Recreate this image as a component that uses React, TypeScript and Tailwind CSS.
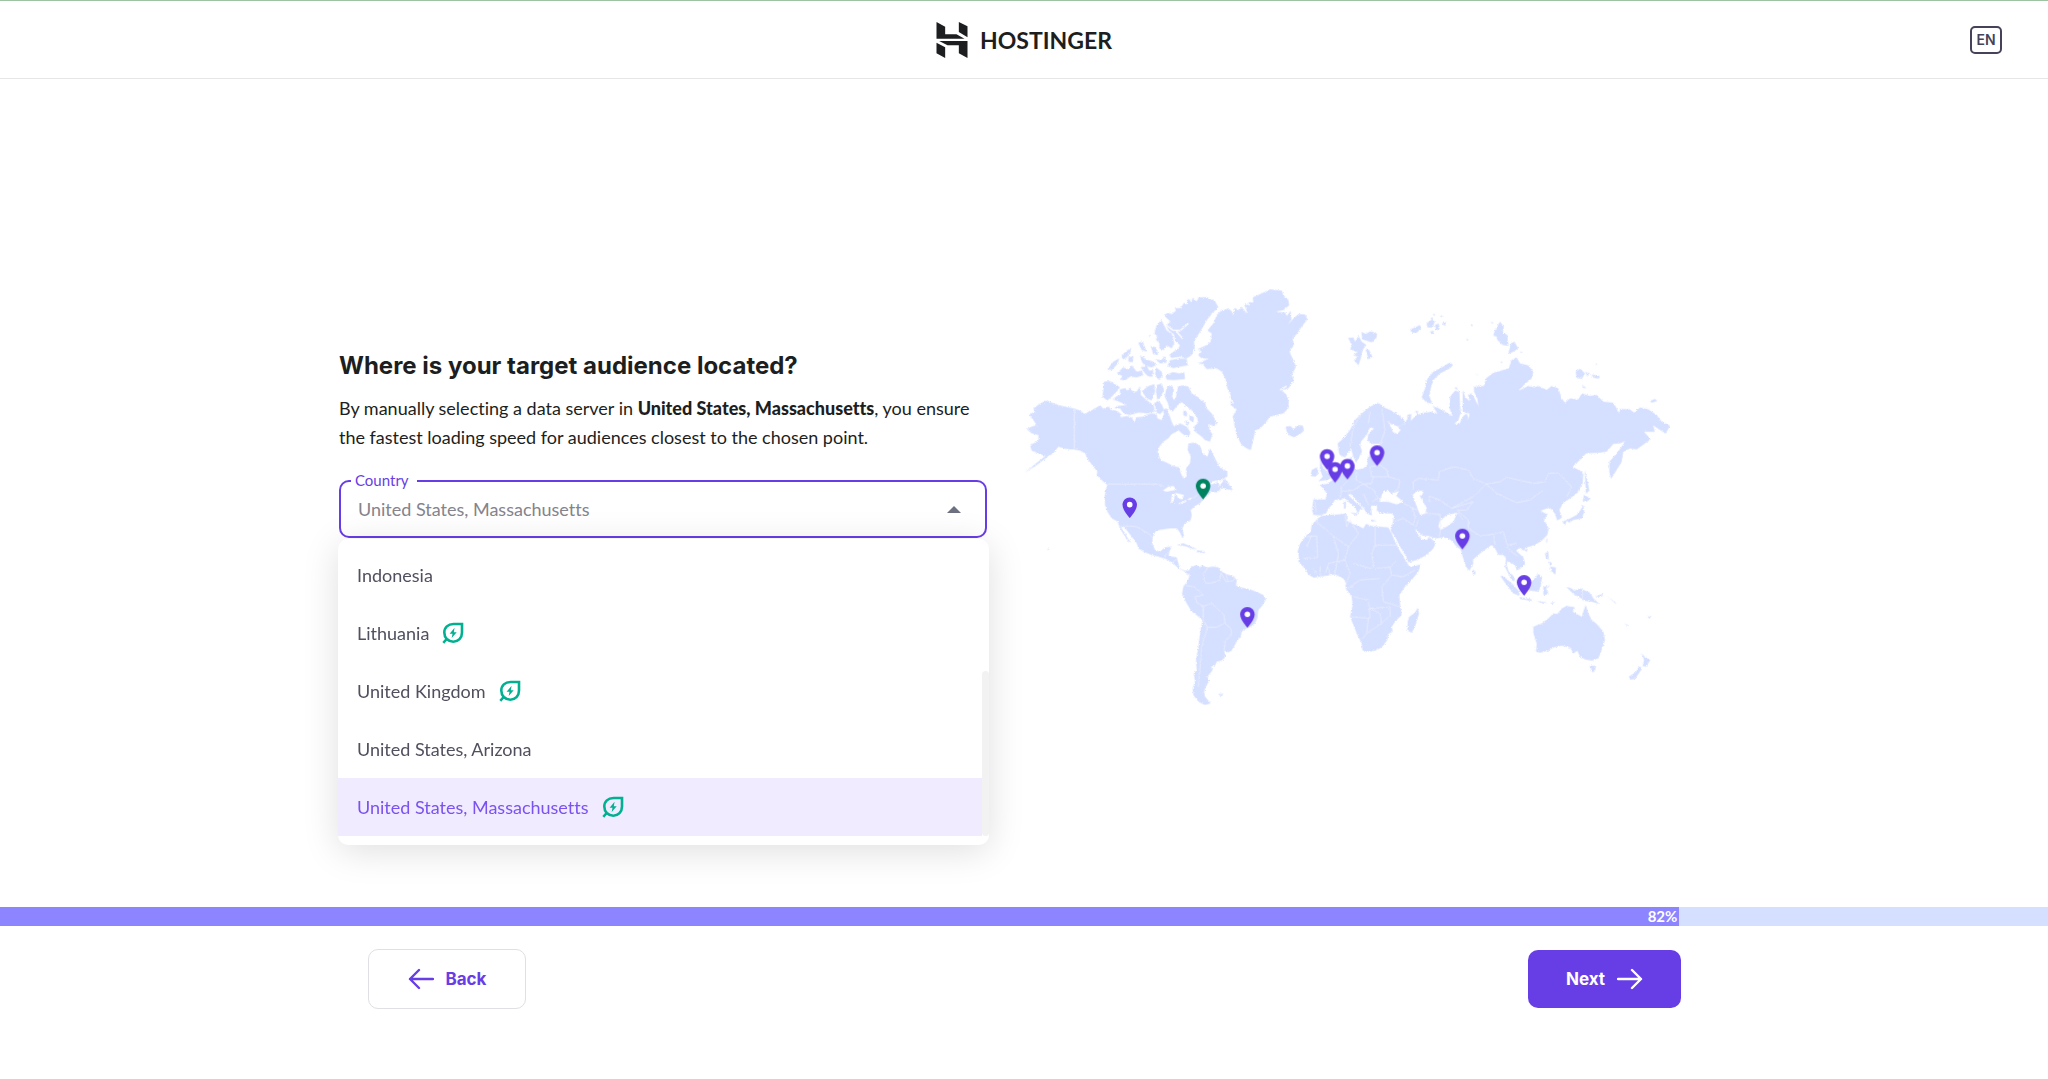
import React from "react";

const LAND = "#d5dfff";

const pins = [
  { x: 921, y: 568, color: "#673de6" },
  { x: 982, y: 597, color: "#673de6" },
  { x: 945, y: 607, color: "#673de6" },
  { x: 1071, y: 557, color: "#673de6" },
  { x: 549, y: 657, color: "#008361" },
  { x: 329, y: 713, color: "#673de6" },
  { x: 682, y: 1042, color: "#673de6" },
  { x: 1327, y: 807, color: "#673de6" },
  { x: 1512, y: 946, color: "#673de6" },
];

const options = [
  { name: "Indonesia", green: false },
  { name: "Lithuania", green: true },
  { name: "United Kingdom", green: true },
  { name: "United States, Arizona", green: false },
  { name: "United States, Massachusetts", green: true },
];

function WorldMap() {
  return (
    <svg viewBox="0 0 1980 1290" className="block w-full" role="img" aria-label="Data server locations">
      <defs>
        <filter id="coast" x="0" y="0" width="100%" height="100%">
          <feTurbulence type="fractalNoise" baseFrequency="0.22" numOctaves="2" seed="4" result="n" />
          <feDisplacementMap in="SourceGraphic" in2="n" scale="8" xChannelSelector="R" yChannelSelector="G" />
        </filter>
      </defs>
      <g filter="url(#coast)">
        {/* North America */}
        <g fill={LAND}>
          <path d="M27 403L45 395 40 385 58 372 80 361 95 368 115 375 135 380 163 386 180 392 195 402 210 392 225 385 240 376 250 386 265 380 275 390 290 392 305 404 300 412 320 408 335 412 344 428 348 412 370 410 380 404 395 400 410 402 412 415 425 420 432 402 430 388 440 385 448 405 455 425 462 440 470 432 480 440 470 455 455 462 445 475 430 485 418 500 413 518 422 540 440 548 460 558 478 562 482 580 490 594 500 590 498 565 510 550 512 530 503 510 505 490 525 488 540 498 550 522 562 530 570 505 580 525 590 545 600 562 622 575 622 590 605 600 590 602 575 604 571 615 578 612 592 606 598 614 595 622 615 596 618 602 610 620 590 638 575 634 560 650 550 658 540 670 525 678 512 690 515 705 512 720 495 730 487 745 492 768 488 774 478 755 470 745 450 745 430 748 408 752 398 770 397 790 405 810 420 815 435 802 455 800 448 815 446 828 470 832 475 850 480 866 495 872 510 872 505 884 490 872 475 865 460 850 440 838 415 830 395 825 370 815 355 805 350 790 335 770 320 750 308 738 303 742 315 760 325 778 334 788 325 785 312 765 300 745 293 725 275 715 262 695 255 675 254 650 258 625 262 615 250 605 240 595 230 585 232 575 220 560 205 540 195 520 180 512 160 508 145 508 130 505 115 500 100 520 85 528 70 540 50 555 14 578 48 550 76 528 60 522 35 512 30 495 45 488 55 480 55 465 35 460 20 447 35 440 50 435 40 420Z" />
          <path d="M620 600L628 615 639 630 620 628 606 622Z" />
          <path d="M252 305L270 303 285 312 300 322 290 335 275 350 262 362 247 350 250 330Z" />
          <path d="M300 328L316 324 322 332 330 322 338 334 350 335 360 318 363 345 380 360 400 375 405 395 380 400 355 398 330 405 310 400 300 385 283 385 290 378 320 375 300 366 278 358 290 348 300 345Z" />
          <path d="M262 268L280 245 298 235 292 252 275 270ZM290 280L310 262 325 268 335 256 350 275 365 272 370 285 350 292 330 290 315 302 300 298 308 288ZM305 225L333 203 332 215 318 235 308 238ZM325 232L340 228 338 247 325 245ZM355 188L368 185 374 200 380 215 365 210ZM360 225L378 238 400 245 408 255 395 262 375 258 365 245ZM362 262L380 258 388 272 400 270 398 290 385 290 375 280ZM392 198L408 202 414 222 400 224ZM385 165L392 166 392 172ZM405 238L424 240 434 228 440 248 420 250ZM408 262L425 275 428 290 415 298 405 285ZM436 286L458 276 478 280 493 276 495 297 460 300 440 299ZM442 258L450 240 476 236 500 236 503 256 482 260 460 264Z" />
          <path d="M405 150L410 135 424 120 432 135 440 152 455 160 463 190 455 205 440 196 432 210 418 206 418 188 408 180 412 168 404 162Z" />
          <path d="M430 106L445 98 455 102 468 92 464 84 482 84 492 68 500 74 505 56 514 66 518 53 530 64 536 52 560 51 585 63 595 82 580 96 562 118 548 142 534 165 522 185 524 205 515 225 500 235 478 230 455 234 447 225 462 214 474 206 480 196 465 182 462 164 446 150 438 135 452 125Z" />
          <path d="M365 333L385 318 403 312 405 335 395 362 380 355ZM410 315L425 310 432 330 422 350 412 360 408 335ZM402 370L415 362 425 372 432 390 420 402 410 398Z" />
          <path d="M440 322L455 315 462 330 456 350 466 360 474 320 490 316 505 320 515 340 535 352 555 368 560 385 575 400 592 430 580 440 568 430 568 450 577 462 570 485 555 480 545 470 525 455 522 440 535 428 530 410 520 395 500 380 485 366 470 378 458 395 448 388 444 370 434 350Z" />
          <path d="M466 442L480 430 500 440 512 458 505 470 488 462ZM490 392L502 396 500 410 490 406ZM508 404L522 412 520 426 508 420ZM495 420L508 428 502 438Z" />
          <path d="M470 795L490 790 510 798 532 808 515 806 495 798ZM530 811L552 813 555 819 532 817ZM82 806L88 808 84 812ZM594 1242L611 1241 602 1248Z" />
        </g>
        {/* Greenland and Iceland */}
        <g fill={LAND}>
          <path d="M533 207L560 195 572 185 575 160 562 152 580 130 590 105 600 95 625 85 636 95 640 106 644 84 658 90 664 80 684 104 672 72 688 76 685 66 700 68 698 52 730 38 750 28 785 32 790 45 805 60 808 75 790 90 765 95 796 98 800 108 812 92 814 118 803 134 820 116 835 102 855 103 862 118 845 140 832 160 818 175 822 195 808 215 820 240 828 260 815 285 822 300 805 325 785 330 800 345 806 365 805 385 790 400 770 405 750 410 735 430 720 445 705 452 700 480 692 510 680 505 665 495 652 470 645 445 638 410 650 388 632 375 632 345 622 325 618 300 605 275 590 265 560 267 548 252 535 250 566 236 545 235 534 225 545 215Z" />
          <path d="M797 440L812 438 820 447 835 435 848 437 852 452 840 462 822 472 808 465 800 455Z" />
        </g>
        {/* South America */}
        <g transform="translate(0 480)">
          <path
            fill={LAND}
            d="M506 392L515 380 530 375 540 382 545 375 560 382 580 380 595 382 605 395 620 403 640 408 650 420 648 437 665 443 690 448 715 458 730 465 738 478 728 495 715 510 712 535 702 555 680 565 665 575 662 590 650 605 635 632 625 637 612 632 617 650 605 662 590 665 585 677 573 680 578 690 570 700 562 710 568 722 558 738 552 755 555 770 572 790 555 795 535 785 520 765 518 745 525 725 521 700 530 690 528 660 535 620 540 580 547 540 530 525 515 515 500 490 486 462 490 440 502 425 508 410Z"
          />
        </g>
        {/* Eurasia mainland */}
        <path
          fill={LAND}
          d="M880 705L876 690 880 658 917 658 920 640 910 625 898 615 920 612 935 602 950 595 965 585 975 575 985 565 983 540 994 530 1000 552 1005 570 1030 565 1042 555 1042 540 1045 526 1056 532 1052 510 1080 502 1078 492 1052 492 1042 480 1045 462 1062 445 1050 442 1040 465 1025 482 1020 495 1026 515 1015 535 1008 548 1000 530 993 505 975 532 958 524 953 490 970 475 990 450 1005 420 1025 400 1050 380 1075 368 1092 382 1110 390 1140 408 1148 430 1135 440 1110 430 1102 422 1115 445 1118 456 1132 462 1142 450 1134 442 1155 430 1160 418 1170 424 1190 405 1210 398 1235 396 1252 400 1238 378 1254 384 1275 395 1298 408 1288 385 1290 350 1305 332 1318 335 1320 370 1322 400 1314 422 1302 432 1318 432 1330 408 1340 400 1346 418 1348 400 1328 394 1328 366 1328 330 1336 352 1350 364 1344 344 1356 340 1375 378 1372 355 1362 335 1362 320 1392 318 1398 295 1420 278 1450 270 1466 265 1475 240 1490 232 1500 250 1525 256 1540 275 1535 295 1515 312 1496 332 1525 318 1542 322 1555 318 1580 330 1595 318 1615 325 1625 355 1635 368 1650 355 1675 358 1685 340 1710 348 1730 345 1750 365 1780 368 1790 385 1798 400 1800 387 1830 388 1842 398 1860 382 1885 388 1910 405 1925 425 1950 437 1937 460 1915 447 1900 436 1904 456 1872 455 1892 478 1875 490 1850 508 1830 505 1810 515 1805 545 1790 570 1773 597 1768 575 1768 545 1790 520 1805 500 1816 483 1800 490 1780 492 1760 515 1740 518 1698 520 1680 540 1657 560 1680 572 1690 580 1688 610 1670 640 1650 655 1630 668 1618 690 1626 712 1612 722 1605 702 1595 688 1585 684 1562 692 1578 702 1584 700 1572 720 1586 745 1582 765 1565 782 1545 795 1520 802 1510 812 1500 802 1488 812 1510 832 1516 852 1500 866 1490 872 1485 855 1470 848 1462 842 1460 855 1466 875 1480 888 1486 906 1475 900 1462 875 1455 860 1458 835 1450 825 1435 825 1425 805 1415 795 1400 805 1380 820 1358 840 1360 850 1348 872 1338 860 1328 830 1322 808 1310 800 1300 788 1290 778 1270 772 1245 775 1225 768 1208 768 1195 755 1185 745 1190 758 1205 778 1222 780 1226 770 1248 788 1240 805 1220 825 1195 838 1165 847 1158 830 1140 800 1125 770 1112 752 1118 730 1122 708 1115 700 1080 700 1070 690 1072 676 1052 678 1056 706 1040 700 1030 682 1010 662 992 642 984 644 1008 668 1029 684 1020 688 1014 702 1006 682 988 668 974 654 962 660 944 660 938 672 925 685 918 700 900 706Z"
        />
        {/* Africa */}
        <g transform="translate(780 240)" fill={LAND}>
          <path d="M113 475L125 468 150 465 175 463 197 460 203 472 200 482 215 490 235 498 250 505 258 492 275 498 300 500 325 502 335 520 345 545 358 570 370 590 383 612 390 620 422 613 415 635 395 660 375 680 358 705 360 730 365 765 345 785 335 800 338 815 325 822 322 840 305 862 285 872 255 876 247 870 245 850 232 825 220 795 210 770 218 735 215 710 197 685 198 670 190 655 165 643 140 647 100 653 85 643 70 620 55 605 57 590 53 575 60 550 80 525 92 515 95 495 105 485Z" />
          <path d="M413 743L417 760 405 800 395 818 382 812 383 785 388 770 405 758Z" />
          <path d="M92 348L95 330 110 322 116 335 108 350ZM120 300L128 320 140 335 150 350 150 358 125 362 115 365 128 350 120 330ZM192 424L198 422 197 446 192 446ZM212 458L232 460 230 468ZM270 478L290 482 275 485ZM578 628L587 635 585 643 578 643Z" />
        </g>
        {/* Arctic islands and north-east Asia */}
        <g transform="translate(1140 0)" fill={LAND}>
          <path d="M150 247L159 255 150 265 120 280 100 300 92 325 88 350 97 370 80 368 65 352 75 325 80 300 100 275 125 262Z" />
          <path d="M285 150L300 125 312 140 308 158 322 165 325 198 308 195 292 180 290 170 280 166ZM325 222L332 190 343 185 355 205 340 215ZM527 275L540 266 555 280 545 297 530 294ZM556 276L570 280 562 290ZM575 283L600 289 596 296 580 293ZM546 314L560 325 548 323ZM750 363L765 357 772 363 755 368Z" />
          <path d="M30 148L45 142 60 135 63 146 50 158 36 158ZM80 130L95 118 104 125 98 142 82 142ZM105 135L115 130 120 145 108 152ZM125 130L138 126 136 138ZM88 155L102 152 98 162ZM98 102L106 103 102 108ZM212 134L220 135 215 139ZM272 126L281 128 276 131ZM-5 415L10 412 14 430 0 440ZM22 405L34 402 32 424 22 425ZM163 322L172 322 170 330ZM46 392L56 394 50 402ZM198 177L206 178 202 182ZM120 106L128 108 124 112ZM92 112L100 114 96 120ZM360 214L368 217 364 220ZM228 282L232 283 230 286ZM302 244L308 246 304 250ZM586 252L592 253 589 256Z" />
          <path d="M554 570L562 600 568 632 558 640 556 610ZM552 645L572 655 560 665 548 662Z" />
        </g>
        {/* South-east Asia and Oceania */}
        <g transform="translate(1350 570)" fill={LAND}>
          <path d="M338 102L343 125 335 145 310 150 298 158 290 152 284 168 278 155 300 145 320 135 332 120ZM228 210L233 205 230 222ZM225 250L235 245 236 268 228 265ZM240 290L258 292 256 314 245 305ZM163 240L173 236 170 246ZM236 272L248 282 240 286Z" />
          <path d="M90 317L105 322 130 345 148 365 148 378 130 370 110 345ZM148 381L185 388 185 393 150 387ZM165 350L185 335 205 312 216 320 212 350 205 365 180 362ZM220 350L240 347 228 356 236 372 220 376ZM198 393L232 398 220 401ZM240 400L256 394 248 402Z" />
          <path d="M288 350L305 355 312 362 330 355 360 368 370 385 388 402 365 395 345 393 325 380 310 372ZM375 380L402 370 395 380ZM410 378L440 400 436 400Z" />
          <path d="M190 470L215 460 235 445 250 430 262 432 275 415 290 408 315 412 308 425 335 440 340 425 347 404 355 430 365 450 380 462 400 485 405 510 395 540 385 565 365 572 345 568 330 560 322 542 310 550 300 532 275 527 250 532 235 542 210 548 198 545 200 520 190 490Z" />
          <path d="M359 587L378 588 375 602 367 607ZM514 547L525 562 541 570 528 590 518 588 522 570ZM508 588L516 596 495 627 480 629 477 620 498 605ZM462 458L476 467 470 466ZM533 440L545 438 538 446Z" />
        </g>
        {/* Svalbard */}
        <g transform="translate(900 90)" fill={LAND}>
          <path d="M84 84L100 82 105 95 115 77 125 95 139 105 128 120 122 145 115 166 102 150 113 141 99 135 113 126 90 118 96 105ZM124 66L138 72 150 64 171 70 170 82 155 97 140 92 127 88ZM137 118L147 120 157 140 145 148Z" />
        </g>
        {/* Inland seas and lakes */}
        <g fill="#fff">
          <path d="M428 632L445 620 460 618 470 630 455 632 440 635ZM455 645L465 640 460 668 453 668ZM465 638L480 642 492 645 487 658 475 655ZM475 670L500 661 498 666 478 673ZM500 658L515 652 512 660Z" />
          <path d="M1178 645L1190 633 1212 632 1205 648 1198 645 1212 670 1220 685 1215 702 1200 705 1190 680Z" />
          <path d="M1258 725L1280 705 1312 698 1300 725 1280 740 1262 750 1255 740Z" />
          <path d="M1077 665L1090 635 1105 632 1115 642 1138 632 1128 647 1150 665 1130 673 1105 666Z" />
        </g>
        {/* Fjords */}
        <path d="M438 135L458 150 480 152 505 130M466 150L488 176M428 105L445 128M575 100L590 108M625 350L640 370M780 330L800 318M545 480L556 500 560 526" fill="none" stroke="#fff" strokeWidth="4" />
        {/* Country borders */}
        <g fill="none" stroke="#eceffd" strokeWidth="2.5">
          <path d="M163 386V508M262 612H412L432 620M300 740L330 738 350 740 370 752 385 760 397 772M432 838L438 822 446 820M455 848L470 838M516 655L540 640M568 606L560 650" />
          <path d="M565 862L550 880 555 908 572 910 600 900 602 878M490 915L520 920 540 935 550 945 525 950 530 968 550 978 575 970 612 1005 615 1030 632 1045 635 1062 615 1085 612 1110M550 978L550 1020 562 1042 545 1100 540 1160 535 1220M562 1042L590 1042 612 1030M602 878L618 905 640 902 645 888M618 885L625 905" />
          <path d="M858 770L890 768 893 832 850 835M875 765L860 800M885 722L940 768 985 800 1015 762 990 720 980 740 975 705M1065 740V795L1055 820 1060 858M1065 795H1135M985 800L975 840 925 850M925 850L915 885M940 770L955 820 945 880M975 840L990 880 975 920M1000 850L1050 865 1110 862 1130 840M1110 862L1115 885 1150 890 1185 870M1115 885L1085 920 1090 965 1140 980M990 920L1020 900 1080 895M1000 950L1045 960 1050 1015 990 1010M1045 1015L1040 1060 1025 1078M1040 1060L1085 1030 1105 1010M1085 1030L1080 1000 1050 985 1110 980 1110 1010M880 865L890 880M900 860L902 890M925 862L930 885M980 925L1000 920" />
          <path d="M1050 395L1045 430M1025 402L1000 440 990 500M1085 385L1095 450 1080 495M1050 560L1080 555 1100 570 1105 590 1140 600 1135 625 1115 640M1050 560L1055 590 1105 590M1010 575L1008 600 1030 612 1055 610 1060 590M985 600L965 620 960 655M965 635L1000 630 1030 612 1060 630 1075 655 1055 665M1030 640L1045 675M1150 670L1175 682 1185 710 1180 735 1150 715 1120 725M1175 682L1190 690M1215 700L1260 702 1262 745 1258 770M885 665L888 695" />
          <path d="M1180 630L1180 605 1195 595 1255 600 1258 575 1300 560 1345 570 1360 595 1398 612 1380 630 1360 650 1330 665 1295 685 1260 660 1228 648 1228 665M1398 612L1440 605 1460 592 1540 610 1575 605 1585 580 1615 578 1655 622 1640 650M1398 612L1430 640 1490 668 1530 660 1570 630M1295 685L1360 665 1340 690 1310 690 1345 720 1345 745 1380 768 1420 762 1425 795M1312 698L1330 720M1425 762L1450 755 1462 795 1490 790M1460 800L1480 820 1495 830M1188 740L1195 720" />
          <path d="M1687 930V965" />
        </g>
      </g>
      {pins.map((p) => (
        <g key={p.x} transform={`translate(${p.x - 37} ${p.y - 67}) scale(3.1)`}>
          <path d="M12 2C8.13 2 5 5.13 5 9c0 5.25 7 13 7 13s7-7.75 7-13c0-3.87-3.13-7-7-7z" fill={p.color} />
          <circle cx="12" cy="9" r="2.7" fill="#fff" />
        </g>
      ))}
    </svg>
  );
}

function LeafIcon() {
  return (
    <svg viewBox="0 0 24 24" className="size-6" fill="none" aria-hidden="true">
      <path d="M2.3 21.8l3.4-3.8" stroke="#00b090" strokeWidth="2.5" />
      <path
        d="M21 3H12.5C7 3 3.3 6.5 3.3 11.5c0 2.6.9 4.8 2.5 6.5 1.7 1.7 3.9 2.7 6.5 2.7 5 0 8.7-3.7 8.7-9.2z"
        stroke="#00b090"
        strokeWidth="2.6"
      />
      <path d="M13.6 6.8L8.6 12.8h2.900l-.8 4.200 5-5.800h-2.900z" fill="#00b090" />
    </svg>
  );
}

function Logo() {
  return (
    <a href="#" className="flex items-center gap-3 text-[#1d1e20]">
      <svg viewBox="0 0 93 108" className="h-9 w-8" fill="currentColor" aria-hidden="true">
        <path d="M0 50V0L26 14V37L60 37L84 50ZM67 30V0L93 13V46Z" />
        <path d="M93 57V108L67 94V70H33L8 57ZM26 76V108L0 94V62Z" />
      </svg>
      <span className="font-[Lato] text-[23px] leading-6 font-bold">HOSTINGER</span>
    </a>
  );
}

function Arrow({ left = false }: { left?: boolean }) {
  return (
    <svg viewBox="0 0 26 22" className="h-[22px] w-[26px]" fill="none" stroke="currentColor" strokeWidth="2.4" strokeLinecap="round" strokeLinejoin="round" aria-hidden="true">
      {left ? <path d="M25 11H2M11 2L2 11l9 9" /> : <path d="M1 11h23M15 2l9 9-9 9" />}
    </svg>
  );
}

export default function App() {
  return (
    <div className="min-h-screen bg-white font-[Lato,sans-serif] text-lg text-[#1d1e20] [font-variant-ligatures:none]">
      <header className="grid h-[79px] grid-cols-[1fr_auto_1fr] items-center border-t border-b border-t-[#9dc3a2] border-b-[#e6e6e8] px-[46px]">
        <div className="col-start-2">
          <Logo />
        </div>
        <button className="h-7 w-8 justify-self-end rounded-[5px] border-2 border-[#46425a] font-[Inter] text-sm leading-none font-semibold text-[#46425a]">
          EN
        </button>
      </header>

      <main className="mx-auto grid max-w-[1370px] grid-cols-[648fr_660fr] gap-[33px] pt-[201px] pr-[29px] pb-[197px]">
        <section className="pt-[68px]">
          <h1 className="font-[Inter] text-2xl leading-9 font-bold">Where is your target audience located?</h1>
          <p className="mt-2.5 pr-1 leading-[29px]">
            By manually selecting a data server in <strong className="font-black">United States, Massachusetts</strong>, you ensure the
            fastest loading speed for audiences closest to the chosen point.
          </p>
          <div className="relative mt-7">
            <label htmlFor="country" className="absolute -top-[10px] left-3 z-10 bg-white pr-2 pl-1 text-[15px] leading-5 text-[#673de6]">
              Country
            </label>
            <input
              id="country"
              type="text"
              role="combobox"
              aria-expanded="true"
              aria-controls="country-list"
              readOnly
              value="United States, Massachusetts"
              className="block h-[58px] w-full rounded-[10px] border-2 border-[#673de6] bg-white px-[17px] text-[#85838c] outline-none"
            />
            <svg viewBox="0 0 14 7" className="absolute top-[26px] right-[26px] h-[7px] w-3.5" fill="#6d7081" aria-hidden="true">
              <path d="M7 0l7 7H0z" />
            </svg>
            <div className="absolute top-full -right-0.5 -left-px mt-px rounded-[10px] bg-white pt-[7px] pb-[9px] shadow-[0_6px_36px_rgba(0,0,0,0.13)]">
              <ul id="country-list" role="listbox" aria-label="Country" className="pr-[7px] text-[#50505e]">
                {options.map((o) => {
                  const selected = o.name === "United States, Massachusetts";
                  return (
                    <li
                      key={o.name}
                      role="option"
                      aria-selected={selected}
                      className={
                        selected
                          ? "flex h-[58px] items-center gap-3 bg-[#f0ebff] pl-[19px] text-[#7a52f0]"
                          : "flex h-[58px] items-center gap-3 pl-[19px]"
                      }
                    >
                      {o.name}
                      {o.green && <LeafIcon />}
                    </li>
                  );
                })}
              </ul>
              <div className="absolute right-0 bottom-[9px] h-[165px] w-[7px] rounded-full bg-[#f2f2f3]" />
            </div>
          </div>
        </section>
        <WorldMap />
      </main>

      <footer>
        <div role="progressbar" aria-label="Setup progress" aria-valuenow={82} aria-valuemin={0} aria-valuemax={100} className="h-[19px] bg-[#d5dfff]">
          <div className="h-full w-[82%] bg-[#8c85ff] pr-0.5 text-right text-[15px] leading-[19px] font-bold text-white">82%</div>
        </div>
        <nav className="mx-auto flex max-w-[1314px] items-center justify-between pt-[23px] pl-px font-[Inter] text-[17px] font-bold">
          <button className="flex h-[60px] w-[158px] items-center justify-center gap-3 rounded-[10px] border border-[#dfdfe4] text-[#673de6]">
            <Arrow left />
            Back
          </button>
          <button className="flex h-[58px] w-[153px] items-center justify-center gap-3 rounded-[10px] bg-[#673de6] text-white">
            Next
            <Arrow />
          </button>
        </nav>
      </footer>
    </div>
  );
}
